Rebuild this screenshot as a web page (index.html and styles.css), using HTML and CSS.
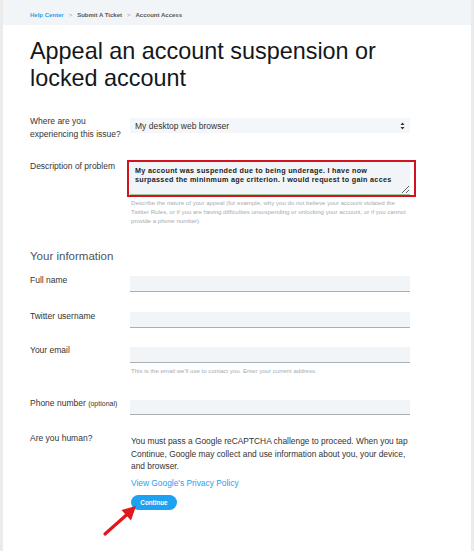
FILE: index.html
```html
<!DOCTYPE html>
<html lang="en">
<head>
<meta charset="utf-8">
<title>Appeal an account suspension or locked account</title>
<link rel="stylesheet" href="styles.css">
</head>
<body>
<div class="page">
  <nav class="crumbs">
    <a class="crumb-link" href="#">Help Center</a>
    <span class="sep">&gt;</span>
    <span>Submit A Ticket</span>
    <span class="sep">&gt;</span>
    <span>Account Access</span>
  </nav>
  <main class="content">
    <h1 class="title">Appeal an account suspension or locked account</h1>
    <form class="form">
      <div class="row row-first">
        <label class="label">Where are you experiencing this issue?</label>
        <div class="select">
          <span>My desktop web browser</span>
          <svg class="select-arrows" width="5" height="8" viewBox="0 0 5 8"><path d="M2.5 0.5 L4.5 3 H0.5 Z M2.5 7.5 L4.5 5 H0.5 Z" fill="#333"/></svg>
        </div>
      </div>
      <div class="row row-desc">
        <label class="label">Description of problem</label>
        <div class="field-col">
          <div class="highlight">
            <textarea class="textarea">My account was suspended due to being underage. I have now surpassed the mininmum age criterion. I would request to gain acces</textarea>
          </div>
          <p class="hint hint-desc">Describe the nature of your appeal (for example, why you do not believe your account violated the Twitter Rules, or if you are having difficulties unsuspending or unlocking your account, or if you cannot provide a phone number).</p>
        </div>
      </div>
      <h2 class="section-title">Your information</h2>
      <div class="row row-name">
        <label class="label">Full name</label>
        <input class="input input-active" type="text">
      </div>
      <div class="row row-user">
        <label class="label">Twitter username</label>
        <input class="input" type="text">
      </div>
      <div class="row row-email">
        <label class="label">Your email</label>
        <div class="field-col">
          <input class="input" type="text">
          <p class="hint hint-email">This is the email we'll use to contact you. Enter your current address.</p>
        </div>
      </div>
      <div class="row row-phone">
        <label class="label">Phone number <span class="optional">(optional)</span></label>
        <input class="input input-phone" type="text">
      </div>
      <div class="row row-human">
        <label class="label">Are you human?</label>
        <div class="field-col human">
          <p class="human-text">You must pass a Google reCAPTCHA challenge to proceed. When you tap Continue, Google may collect and use information about you, your device, and browser.</p>
          <a class="privacy" href="#">View Google's Privacy Policy</a>
          <button class="continue" type="button">Continue</button>
        </div>
      </div>
    </form>
  </main>
  <svg class="arrow" width="40" height="38" viewBox="0 0 40 38">
    <line x1="5" y1="32" x2="27" y2="12.5" stroke="#e2161e" stroke-width="3.2" stroke-linecap="round"/>
    <path d="M36 4 L31 18.5 L21.5 8 Z" fill="#e2161e"/>
  </svg>
</div>
</body>
</html>
```
FILE: styles.css
```css
html, body {
  margin: 0;
  padding: 0;
}
body {
  background: #ebebeb;
  font-family: "Liberation Sans", Arial, sans-serif;
  color: #333;
}
.page {
  position: relative;
  margin: 0 3px;
  background: #fff;
  min-height: 551px;
}
.crumbs {
  height: 25px;
  box-sizing: border-box;
  padding: 5px 0 0 27px;
  background: #f2f5f8;
  display: flex;
  align-items: center;
  gap: 5px;
  font-size: 6px;
  font-weight: bold;
  color: #555;
}
.crumb-link {
  color: #1da1f2;
  text-decoration: none;
}
.sep {
  color: #999;
  font-weight: normal;
}
.content {
  padding: 13.2px 27px 0 27px;
}
.title {
  margin: 0;
  max-width: 400px;
  font-size: 23.4px;
  line-height: 27.3px;
  font-weight: normal;
  color: #14171a;
}
.form {
  margin-top: 22.5px;
}
.row {
  display: grid;
  grid-template-columns: 100px auto;
  align-items: start;
}
.label {
  font-size: 8.5px;
  line-height: 12.7px;
  color: #333;
  padding-right: 6px;
}
.optional {
  font-size: 7px;
}
.select {
  margin-top: 3px;
  width: 280px;
  height: 15px;
  box-sizing: border-box;
  padding: 0 5px;
  background: #f4f7f9;
  display: flex;
  align-items: center;
  justify-content: space-between;
  font-size: 8.5px;
  color: #333;
}
.row-desc {
  margin-top: 19.3px;
}
.highlight {
  margin-left: -3px;
  width: 280px;
  padding: 0 4px 0.3px 1px;
  border: 2px solid #d3121f;
}
.textarea {
  display: block;
  width: 280px;
  height: 33px;
  box-sizing: border-box;
  margin: 0;
  padding: 4px 15px 0 5px;
  border: 0;
  border-bottom: 1px solid #9cc79c;
  background: #f2f5f8;
  font-family: "Liberation Sans", Arial, sans-serif;
  font-weight: bold;
  font-size: 7.2px;
  letter-spacing: 0.3px;
  line-height: 9.5px;
  color: #222;
  overflow: hidden;
  resize: vertical;
}
.hint {
  margin: 0;
  width: 280px;
  font-size: 6.1px;
  line-height: 9.4px;
  color: #a5acb2;
}
.hint-desc {
  margin-top: 0.3px;
  margin-left: 1px;
}
.hint-email {
  margin-top: 3.5px;
  margin-left: 1px;
}
.section-title {
  margin: 23.5px 0 0 0;
  font-size: 11.5px;
  line-height: 14px;
  font-weight: normal;
  color: #4a5661;
}
.input {
  display: block;
  width: 280px;
  height: 16px;
  box-sizing: border-box;
  margin: 2.5px 0 0 0;
  padding: 0 5px;
  border: 0;
  border-bottom: 1px solid #a9b1b8;
  background: #f2f5f8;
}
.input-active {
  border-bottom-color: #8fc48f;
}
.input-phone {
  height: 15.5px;
}
.row-name {
  margin-top: 10.7px;
}
.row-user {
  margin-top: 17.1px;
}
.row-email {
  margin-top: 16.3px;
}
.row-phone {
  margin-top: 21.6px;
}
.row-human {
  margin-top: 16.5px;
}
.human {
  display: flex;
  flex-direction: column;
  align-items: flex-start;
  padding-left: 1px;
}
.human-text {
  margin: 3px 0 0 0;
  width: 282px;
  font-size: 8.4px;
  line-height: 12.8px;
  color: #333;
}
.privacy {
  margin-top: 3.9px;
  font-size: 8.4px;
  line-height: 12px;
  color: #1da1f2;
  text-decoration: none;
}
.continue {
  margin-top: 6px;
  width: 46px;
  height: 15px;
  padding: 0;
  border: 0;
  border-radius: 8px;
  background: #1da1f2;
  color: #fff;
  font-family: "Liberation Sans", Arial, sans-serif;
  font-weight: bold;
  font-size: 6.3px;
}
.arrow {
  position: absolute;
  left: 97px;
  top: 502px;
}
```
